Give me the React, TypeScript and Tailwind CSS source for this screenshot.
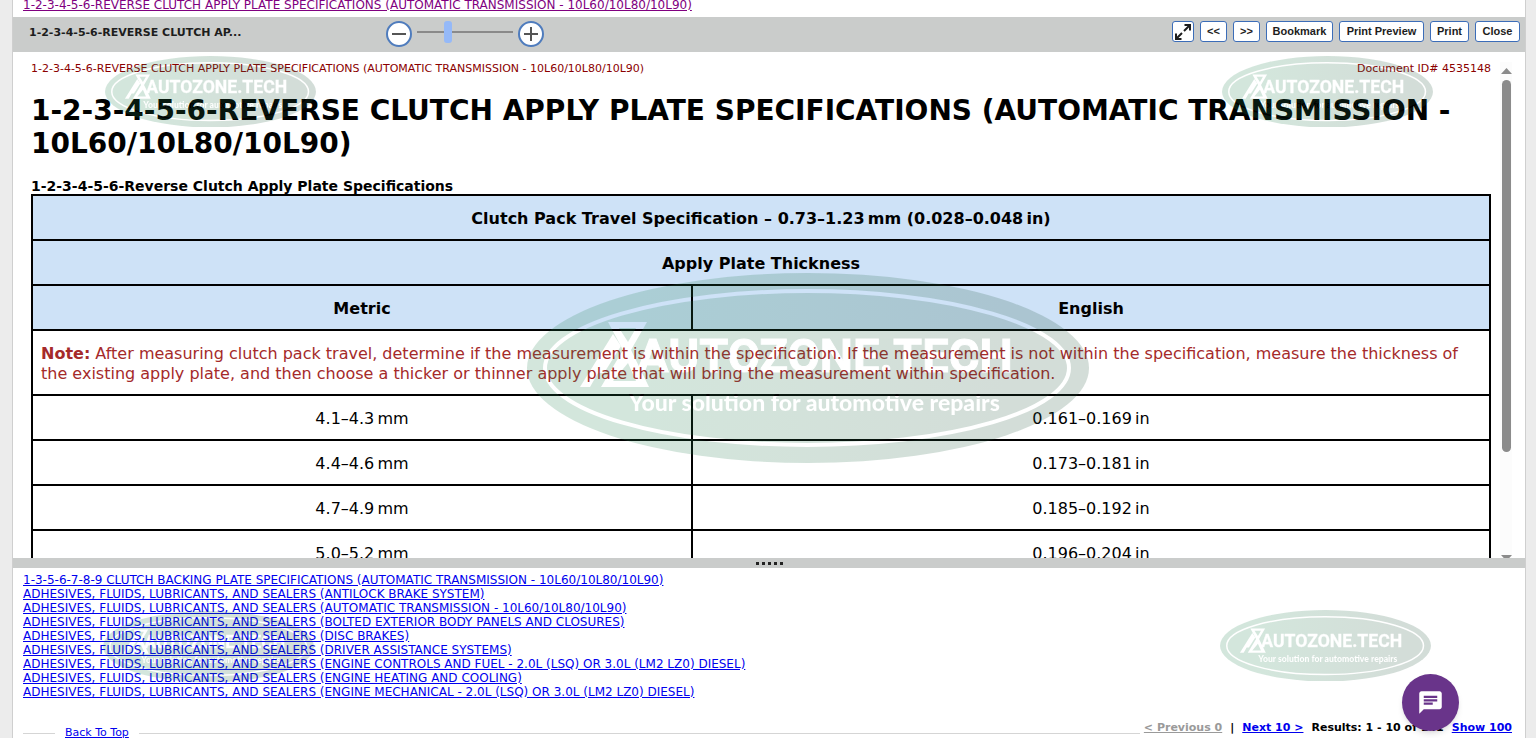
import { useState } from "react"

const documentTitle = "1-2-3-4-5-6-REVERSE CLUTCH APPLY PLATE SPECIFICATIONS (AUTOMATIC TRANSMISSION - 10L60/10L80/10L90)"

// thin spaces before the units
const thicknesses = [
  { metric: "4.1–4.3\u2009mm", english: "0.161–0.169\u2009in" },
  { metric: "4.4–4.6\u2009mm", english: "0.173–0.181\u2009in" },
  { metric: "4.7–4.9\u2009mm", english: "0.185–0.192\u2009in" },
  { metric: "5.0–5.2\u2009mm", english: "0.196–0.204\u2009in" },
]

const results = [
  "1-3-5-6-7-8-9 CLUTCH BACKING PLATE SPECIFICATIONS (AUTOMATIC TRANSMISSION - 10L60/10L80/10L90)",
  "ADHESIVES, FLUIDS, LUBRICANTS, AND SEALERS (ANTILOCK BRAKE SYSTEM)",
  "ADHESIVES, FLUIDS, LUBRICANTS, AND SEALERS (AUTOMATIC TRANSMISSION - 10L60/10L80/10L90)",
  "ADHESIVES, FLUIDS, LUBRICANTS, AND SEALERS (BOLTED EXTERIOR BODY PANELS AND CLOSURES)",
  "ADHESIVES, FLUIDS, LUBRICANTS, AND SEALERS (DISC BRAKES)",
  "ADHESIVES, FLUIDS, LUBRICANTS, AND SEALERS (DRIVER ASSISTANCE SYSTEMS)",
  "ADHESIVES, FLUIDS, LUBRICANTS, AND SEALERS (ENGINE CONTROLS AND FUEL - 2.0L (LSQ) OR 3.0L (LM2 LZ0) DIESEL)",
  "ADHESIVES, FLUIDS, LUBRICANTS, AND SEALERS (ENGINE HEATING AND COOLING)",
  "ADHESIVES, FLUIDS, LUBRICANTS, AND SEALERS (ENGINE MECHANICAL - 2.0L (LSQ) OR 3.0L (LM2 LZ0) DIESEL)",
]

const toolButton =
  "flex h-[21px] items-center justify-center rounded-[3px] border border-[#3c6db8] bg-white font-['Liberation_Sans',sans-serif] text-[11px] font-bold leading-none text-[#1d1d1d]"
const cell = "h-[45px] border-2 border-black px-2 pt-[2px] text-center"

function Watermark({ id, className }: { id: string; className: string }) {
  return (
    <svg viewBox="0 0 562 190" className={`pointer-events-none absolute ${className}`} aria-hidden="true">
      <defs>
        <linearGradient id={id}>
          <stop offset="0.2" stopColor="#238250" />
          <stop offset="0.85" stopColor="#23553c" />
        </linearGradient>
        {/* the lettering and the ring are cut out of the oval */}
        <mask id={`${id}-mask`}>
          <rect width="562" height="190" fill="#fff" />
          <ellipse cx="280" cy="95" rx="262" ry="77" fill="none" stroke="#000" strokeWidth="4" />
          <path d="M53 114 86 61l8 12-17 27h-6l-8 14z" fill="#000" />
          <path d="M81 49h39l-16 28 18 37H74l22-37zM92 55l9 14 8-14zM86 108h23l-8-18z" fill="#000" fillRule="evenodd" />
          <text x="110" y="99" fontFamily="Roboto, sans-serif" fontWeight="700" fontSize="47" fill="#000" stroke="#000">
            AUTOZONE.TECH
          </text>
          <text x="102" y="138" fontFamily="Lato, sans-serif" fontWeight="900" fontSize="23" fill="#000">
            Your solution for automotive repairs
          </text>
        </mask>
      </defs>
      <ellipse cx="281" cy="95" rx="281" ry="95" fill={`url(#${id})`} fillOpacity="0.2" mask={`url(#${id}-mask)`} />
    </svg>
  )
}

function Toolbar() {
  const [zoom, setZoom] = useState(31)
  const zoomButton = "flex size-[26px] items-center justify-center rounded-full border-2 border-[#4f7cbd] bg-white text-[#555]"

  return (
    <header className="flex h-[35px] shrink-0 items-center justify-between bg-[#cacccb] pl-4 pr-[5px]">
      <div className="mb-[2px] flex items-center">
        <h2 className="w-[357px] text-[11px] font-bold text-[#1d1d1d]">1-2-3-4-5-6-REVERSE CLUTCH AP...</h2>
        <button className={zoomButton} aria-label="Zoom out" onClick={() => setZoom(Math.max(0, zoom - 10))}>
          <svg viewBox="0 0 16 16" className="size-4 shrink-0" stroke="currentColor" strokeWidth="2">
            <path d="M1 8h14" />
          </svg>
        </button>
        <input
          type="range"
          aria-label="Zoom"
          value={zoom}
          onChange={(e) => setZoom(Number(e.target.value))}
          className="mx-[5px] mb-1 h-[21px] w-24 appearance-none bg-transparent [&::-webkit-slider-runnable-track]:h-[2px] [&::-webkit-slider-runnable-track]:bg-[#8a8a8a] [&::-webkit-slider-thumb]:-mt-[10px] [&::-webkit-slider-thumb]:h-[22px] [&::-webkit-slider-thumb]:w-2 [&::-webkit-slider-thumb]:appearance-none [&::-webkit-slider-thumb]:rounded-[3px] [&::-webkit-slider-thumb]:bg-[#95b9f8]"
        />
        <button className={zoomButton} aria-label="Zoom in" onClick={() => setZoom(Math.min(100, zoom + 10))}>
          <svg viewBox="0 0 16 16" className="size-4 shrink-0" stroke="currentColor" strokeWidth="2">
            <path d="M1 8h14M8 1v14" />
          </svg>
        </button>
      </div>
      <div className="mb-[6px] flex gap-[6px]">
        <button className={`${toolButton} w-[22px]`} aria-label="Full screen">
          <svg viewBox="0 0 18 18" className="size-[18px] shrink-0" fill="none" stroke="#1d1d1d" strokeWidth="2">
            <path d="M10.500 2H16v5.500M16 2l-6 6M7.500 16H2v-5.500M2 16l6-6" />
          </svg>
        </button>
        <button className={`${toolButton} w-[27px]`}>&lt;&lt;</button>
        <button className={`${toolButton} w-[27px]`}>&gt;&gt;</button>
        <button className={`${toolButton} w-[67px]`}>Bookmark</button>
        <button className={`${toolButton} w-[85px]`}>Print Preview</button>
        <button className={`${toolButton} w-[39px]`}>Print</button>
        <button className={`${toolButton} w-[45px]`}>Close</button>
      </div>
    </header>
  )
}

function Scrollbar() {
  return (
    <div className="ml-[9px] mr-[13px] flex w-3 shrink-0 flex-col items-center overflow-hidden bg-[#fcfcfc] pt-[6px]" aria-hidden="true">
      <svg viewBox="0 0 11 6" className="h-[6px] w-[11px] shrink-0 fill-[#8b8b8b]">
        <path d="M0 6 5.500 0 11 6z" />
      </svg>
      <div className="mt-[6px] h-[76%] w-[9px] shrink-0 rounded-full bg-[#8b8b8b]" />
      <svg viewBox="0 0 11 6" className="-mb-[3px] mt-auto h-[6px] w-[11px] shrink-0 fill-[#8b8b8b]">
        <path d="M0 0 5.500 6 11 0z" />
      </svg>
    </div>
  )
}

function DocumentPane() {
  return (
    <main className="flex min-h-0 flex-1 pl-[18px] pt-[10px]">
      <div className="min-w-0 flex-1 overflow-y-auto [scrollbar-width:none]">
        <div className="flex justify-between text-[11px] leading-[14px] text-[#8b0000]">
          <span>{documentTitle}</span>
          <span>Document ID# 4535148</span>
        </div>
        <h1 className="mt-[18px] text-[28px] font-bold leading-[33px] text-black">{documentTitle}</h1>
        <table className="mt-[18px] w-full border-collapse text-[16px] leading-5 text-black">
          <caption className="text-left text-[14px] font-bold leading-4">1-2-3-4-5-6-Reverse Clutch Apply Plate Specifications</caption>
          <thead className="bg-[#cee2f7]">
            <tr>
              <th colSpan={2} className={cell}>Clutch Pack Travel Specification – 0.73–1.23{"\u2009"}mm (0.028–0.048{"\u2009"}in)</th>
            </tr>
            <tr>
              <th colSpan={2} className={cell}>Apply Plate Thickness</th>
            </tr>
            <tr>
              <th className={`${cell} w-[660px]`}>Metric</th>
              <th className={cell}>English</th>
            </tr>
          </thead>
          <tbody>
            <tr>
              <td colSpan={2} className="h-[65px] border-2 border-black px-2 pt-[2px] text-left text-[#a52a2a]">
                <b>Note:</b> After measuring clutch pack travel, determine if the measurement is within the specification. If the
                measurement is not within the specification, measure the thickness of the existing apply plate, and then choose
                a thicker or thinner apply plate that will bring the measurement within specification.
              </td>
            </tr>
            {thicknesses.map((row) => (
              <tr key={row.metric}>
                <td className={cell}>{row.metric}</td>
                <td className={cell}>{row.english}</td>
              </tr>
            ))}
          </tbody>
        </table>
      </div>
      <Scrollbar />
    </main>
  )
}

function ResultsPane() {
  return (
    <section className="h-[170px] shrink-0 overflow-hidden pl-[10px] pt-[5px]">
      <ul className="text-[12px] leading-[14px] text-[#0000ee]">
        {results.map((title) => (
          <li key={title}>
            <a href="#" className="underline">{title}</a>
          </li>
        ))}
      </ul>
      <div className="mt-[21px] flex items-start pr-[13px] text-[11px] leading-4">
        <div className="mt-[5px] flex flex-1 items-center gap-[10px]">
          <span className="h-px w-8 bg-[#d5d5d5]" />
          <a href="#" className="text-[#0000ee] underline">Back To Top</a>
          <span className="h-px flex-1 bg-[#d5d5d5]" />
        </div>
        <nav className="ml-1 flex gap-2 font-bold text-black">
          <a href="#" className="text-[#9a9a9a] underline">&lt; Previous 0</a>
          <span>|</span>
          <a href="#" className="text-[#0000ee] underline">Next 10 &gt;</a>
          <span>Results: 1 - 10 of 141</span>
          <a href="#" className="text-[#0000ee] underline">Show 100</a>
        </nav>
      </div>
    </section>
  )
}

export default function App() {
  return (
    <div className="relative flex h-screen overflow-hidden bg-[#ececec] pl-3 pr-[10px] font-['DejaVu_Sans',sans-serif]">
      <div className="flex min-w-0 flex-1 flex-col border-x border-[#cfcfcf] bg-white">
        <div className="flex h-[17px] shrink-0 items-start pl-[10px] text-[12px] leading-[10px]">
          <a href="#" className="text-[#800080] underline">{documentTitle}</a>
        </div>
        <Toolbar />
        <DocumentPane />
        <div className="flex h-[10px] shrink-0 items-center justify-center gap-[3px] bg-[#cacccb]">
          {[0, 1, 2, 3, 4].map((i) => (
            <span key={i} className="size-[3px] bg-[#222]" />
          ))}
        </div>
        <ResultsPane />
      </div>

      <Watermark id="wm-top-left" className="left-[105px] top-14 w-[211px]" />
      <Watermark id="wm-top-right" className="right-[103px] top-14 w-[211px]" />
      <Watermark id="wm-center" className="left-[527px] top-[273px] w-[562px]" />
      <Watermark id="wm-bottom-left" className="bottom-[56px] left-[103px] w-[211px]" />
      <Watermark id="wm-bottom-right" className="bottom-[57px] right-[105px] w-[211px]" />

      <button
        className="absolute bottom-[7px] right-[77px] flex size-[57px] items-center justify-center rounded-full bg-[#69348a] text-white shadow-md"
        aria-label="Open chat"
      >
        <svg viewBox="0 0 24 24" className="size-[27px]" fill="currentColor">
          <path d="M20 2H4c-1.100 0-2 .9-2 2v18l4-4h14c1.100 0 2-.9 2-2V4c0-1.100-.9-2-2-2zM6 6h12v2H6zM6 9h12v2H6zM6 12h8v2H6z" fillRule="evenodd" />
        </svg>
      </button>
    </div>
  )
}
